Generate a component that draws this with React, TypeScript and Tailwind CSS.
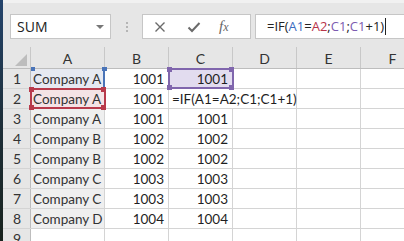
import React from 'react';

const cols = [
  { key: 'A', w: 'w-[74px]' },
  { key: 'B', w: 'w-[64px]' },
  { key: 'C', w: 'w-[64px]' },
  { key: 'D', w: 'w-[64px]' },
  { key: 'E', w: 'w-[64px]' },
  { key: 'F', w: 'w-[64px]' },
];

const rows = [
  ['Company A', '1001', '1001'],
  ['Company A', '1001', ''],
  ['Company A', '1001', '1001'],
  ['Company B', '1002', '1002'],
  ['Company B', '1002', '1002'],
  ['Company C', '1003', '1003'],
  ['Company C', '1003', '1003'],
  ['Company D', '1004', '1004'],
  ['', '', ''],
];

const font = { fontFamily: 'Lato, "Open Sans", sans-serif' };

function Corners({ color }: { color: string }) {
  const sq = `absolute w-[5px] h-[5px] ${color}`;
  return (
    <>
      <span className={`${sq} -left-[2px] -top-[2px]`} />
      <span className={`${sq} -right-[2px] -top-[2px]`} />
      <span className={`${sq} -left-[2px] -bottom-[2px]`} />
      <span className={`${sq} -right-[2px] -bottom-[2px]`} />
    </>
  );
}

function Cell({ r, c, value }: { r: number; c: number; value: string }) {
  const base = `relative shrink-0 h-full border-r border-[#d4d4d4] text-[13.5px] text-[#1f1f1f] leading-[20px] whitespace-nowrap ${cols[c].w}`;

  if (c === 0) {
    if (r === 0) {
      return (
        <div className={`${base} bg-[#e6e9f1] pl-[2px] text-[#333]`}>
          {value}
          <span className="absolute right-[-1px] top-0 bottom-0 w-[2px] bg-[#4a74b8]" />
          <span className="absolute right-[-3px] top-[-2px] w-[5px] h-[4px] bg-[#4a74b8]" />
          <span className="absolute left-0 top-[-2px] w-[4px] h-[4px] bg-[#4a74b8]" />
        </div>
      );
    }
    if (r === 1) {
      return (
        <div className={`${base} bg-[#f4e3e5] pl-[2px] text-[#333] outline-2 outline-[#b83a4b] -outline-offset-1 z-10`}>
          {value}
          <Corners color="bg-[#b83a4b]" />
        </div>
      );
    }
    return (
      <div className={`${base} ${r < 8 ? 'bg-[#efefef]' : 'bg-white'} pl-[2px] text-[#333]`}>{value}</div>
    );
  }

  if (c === 2 && r === 0) {
    return (
      <div className={`${base} bg-[#e2dcef] text-right pr-[4px] outline-2 outline-[#8066ad] -outline-offset-1 z-10`}>
        {value}
        <Corners color="bg-[#8066ad]" />
      </div>
    );
  }

  if (c === 2 && r === 1) {
    return (
      <div className={`${base} border-r-0 pl-[3px] overflow-visible z-10 text-[12.5px]`}>
        =IF(A1=A2;C1;C1+1)
      </div>
    );
  }

  if (c === 3 && r === 1) {
    return <div className={`${base}`} />;
  }

  return <div className={`${base} text-right pr-[4px]`}>{value}</div>;
}

export default function App() {
  return (
    <div className="w-[404px] h-[241px] overflow-hidden flex bg-white" style={font}>
      <div className="w-[3px] shrink-0 bg-gradient-to-b from-[#24446c] via-[#1e2f3a] to-[#18221d]" />
      <div className="flex-1 flex flex-col min-w-0">
        {/* formula bar */}
        <div className="h-[47px] shrink-0 bg-[#e6e6e6] border-t-[3px] border-[#f1f1f1] flex items-start pt-[11px] pl-[7px]">
          <div className="w-[101px] h-[25px] bg-white border border-[#c6c6c6] flex items-center justify-between pl-[6px] pr-[6px]">
            <span className="text-[14px] text-[#222]" style={{ fontFamily: '"Open Sans", sans-serif' }}>SUM</span>
            <span className="w-0 h-0 border-l-[4px] border-r-[4px] border-t-[4px] border-l-transparent border-r-transparent border-t-[#777]" />
          </div>
          <div className="w-[31px] h-[25px] flex flex-col items-center justify-center gap-[2px]">
            <span className="w-[2px] h-[2px] bg-[#b5b5b5]" />
            <span className="w-[2px] h-[2px] bg-[#b5b5b5]" />
            <span className="w-[2px] h-[2px] bg-[#b5b5b5]" />
          </div>
          <div className="w-[109px] h-[25px] bg-white border border-[#c6c6c6] flex items-center pl-[11px]">
            <svg width="12" height="12" viewBox="0 0 12 12" className="mr-[21px]">
              <path d="M1.5 1.5 L10.5 10.5 M10.5 1.5 L1.5 10.5" stroke="#6a6a6a" strokeWidth="1.4" fill="none" />
            </svg>
            <svg width="14" height="12" viewBox="0 0 14 12" className="mr-[18px]">
              <path d="M1.5 6.5 L5 10 L12.5 2" stroke="#6a6a6a" strokeWidth="2" fill="none" />
            </svg>
            <span className="italic text-[15px] text-[#666]" style={{ fontFamily: '"Liberation Serif", serif' }}>
              f<span className="text-[12px]">x</span>
            </span>
          </div>
          <div className="w-[4px]" />
          <div className="flex-1 h-[25px] bg-white border border-r-0 border-[#c6c6c6] flex items-center pl-[11px] text-[13px] whitespace-nowrap text-[#222]" style={{ fontFamily: '"Open Sans", sans-serif' }}>
            =IF(<span className="text-[#3b6cc0]">A1</span>=<span className="text-[#b8344a]">A2</span>;
            <span className="text-[#7c5bb0]">C1</span>;<span className="text-[#7c5bb0]">C1</span>+1)
            <span className="w-[1px] h-[17px] bg-[#222] ml-[1px]" />
          </div>
        </div>

        {/* column header */}
        <div className="h-[22px] shrink-0 flex bg-[#e6e6e6] border-b border-[#bdbdbd]">
          <div className="w-[28px] shrink-0 border-r border-[#c8c8c8] flex items-end justify-end pr-[3px] pb-[2px]">
            <svg width="12" height="12" viewBox="0 0 12 12">
              <path d="M12 0 L12 12 L0 12 Z" fill="#bdbdbd" />
            </svg>
          </div>
          {cols.map((c) => (
            <div
              key={c.key}
              className={`${c.w} shrink-0 border-r border-[#c8c8c8] flex items-center justify-center text-[14px] text-[#333] pt-[1px]`}
            >
              {c.key}
            </div>
          ))}
        </div>

        {/* rows */}
        {rows.map((row, r) => (
          <div key={r} className="h-[20px] shrink-0 flex border-b border-[#d4d4d4]">
            <div className="w-[28px] shrink-0 bg-[#e6e6e6] border-r border-[#bdbdbd] flex items-center justify-center text-[14px] text-[#333] leading-[20px] pl-[1px]">
              {r + 1}
            </div>
            {cols.map((c, ci) => (
              <Cell key={c.key} r={r} c={ci} value={row[ci] ?? ''} />
            ))}
          </div>
        ))}
      </div>
    </div>
  );
}
